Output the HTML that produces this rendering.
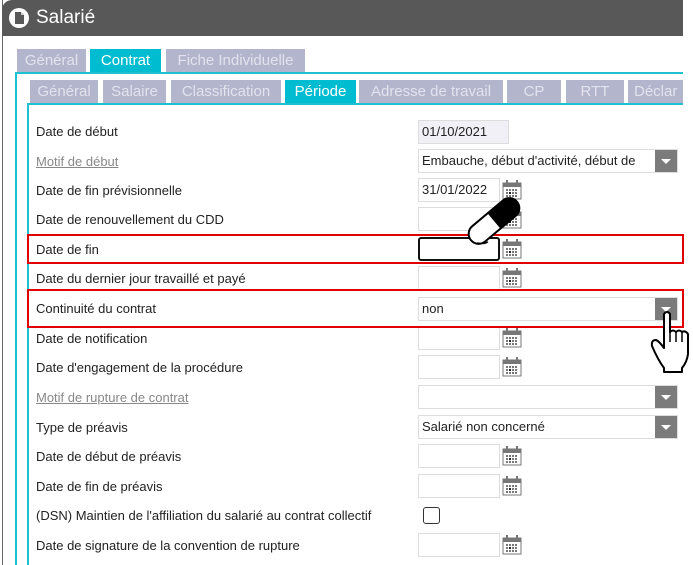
<!DOCTYPE html>
<html><head><meta charset="utf-8"><style>
*{margin:0;padding:0;box-sizing:border-box}
body{width:693px;height:565px;background:#fff;position:relative;overflow:hidden;font-family:"Liberation Sans",sans-serif;font-size:13px;color:#222}
.a{position:absolute}
.title{left:2px;top:0;width:681px;height:36px;background:#585858;border-top-left-radius:10px;color:#fff;font-size:19px;line-height:36px;padding-left:34px}
.tab{position:absolute;height:23px;background:#b3b5cc;color:#e2e3ee;font-size:15px;line-height:23px;text-align:center}
.tab.on{background:#00bcd0;color:#fff}
.lbl{position:absolute;left:36px;line-height:16px;margin-top:1px}
.lbl.u{color:#888;text-decoration:underline}
.inp{position:absolute;left:418px;width:82px;height:24px;border:1px solid #ddd;background:#fff;padding-left:3px;line-height:22px;font-size:13px}
.sel{position:absolute;left:418px;width:260px;height:24px;border:1px solid #ddd;background:#fff;padding-left:3px;line-height:22px;font-size:13px;overflow:hidden;white-space:nowrap}
.sel .b{position:absolute;right:0;top:0;width:22px;height:22px;background:#7b7b7b}
.sel .b:after{content:"";position:absolute;left:6px;top:9px;border-left:5px solid transparent;border-right:5px solid transparent;border-top:5px solid #fff}
.cal{position:absolute;left:502px;width:20px;height:20px}
.red{position:absolute;left:27px;width:657px;border:2px solid #e00000}
</style></head><body>
<div class="a" style="left:2px;top:0;width:1px;height:565px;background:#666"></div>
<div class="a title">Salarié</div>
<svg class="a" style="left:8px;top:7px" width="22" height="22" viewBox="0 0 22 22"><circle cx="11" cy="11" r="10" fill="#fff"/><path d="M7 5h6l3 3v9H7z" fill="#585858"/><path d="M13 5v3h3" fill="#ccc"/></svg>
<div class="tab" style="left:17px;top:49px;width:69px">Général</div>
<div class="tab on" style="left:90px;top:49px;width:71px">Contrat</div>
<div class="tab" style="left:166px;top:49px;width:139px">Fiche Individuelle</div>
<div class="a" style="left:15px;top:72px;width:668px;height:2px;background:#1fc0d2"></div>
<div class="a" style="left:15px;top:72px;width:2px;height:493px;background:#1fc0d2"></div>
<div class="tab" style="left:30px;top:80px;width:68px">Général</div>
<div class="tab" style="left:103px;top:80px;width:63px">Salaire</div>
<div class="tab" style="left:171px;top:80px;width:110px">Classification</div>
<div class="tab on" style="left:285px;top:80px;width:71px">Période</div>
<div class="tab" style="left:359px;top:80px;width:144px">Adresse de travail</div>
<div class="tab" style="left:507px;top:80px;width:54px">CP</div>
<div class="tab" style="left:566px;top:80px;width:58px">RTT</div>
<div class="tab" style="left:628px;top:80px;width:55px;text-align:left;padding-left:6px;overflow:hidden">Déclar</div>
<div class="a" style="left:27px;top:103px;width:656px;height:2px;background:#1fc0d2"></div>
<div class="a" style="left:27px;top:103px;width:2px;height:462px;background:#1fc0d2"></div>

<div class="lbl" style="top:123px">Date de début</div>
<div class="lbl u" style="top:153px">Motif de début </div>
<div class="lbl" style="top:182px">Date de fin prévisionnelle</div>
<div class="lbl" style="top:211px">Date de renouvellement du CDD</div>
<div class="lbl" style="top:241px">Date de fin</div>
<div class="lbl" style="top:270px">Date du dernier jour travaillé et payé</div>
<div class="lbl" style="top:300px">Continuité du contrat</div>
<div class="lbl" style="top:330px">Date de notification</div>
<div class="lbl" style="top:359px">Date d'engagement de la procédure</div>
<div class="lbl u" style="top:389px">Motif de rupture de contrat </div>
<div class="lbl" style="top:419px">Type de préavis</div>
<div class="lbl" style="top:448px">Date de début de préavis</div>
<div class="lbl" style="top:478px">Date de fin de préavis</div>
<div class="lbl" style="top:507px">(DSN) Maintien de l'affiliation du salarié au contrat collectif</div>
<div class="lbl" style="top:537px">Date de signature de la convention de rupture</div>

<div class="inp" style="top:120px;width:91px;background:#f0f0f6">01/10/2021</div>
<div class="sel" style="top:149px">Embauche, début d'activité, début de<div class="b"></div></div>
<div class="inp" style="top:178px">31/01/2022</div>
<div class="inp" style="top:207px"></div>
<div class="inp" style="top:237px;border:2px solid #111;border-radius:3px"></div>
<div class="inp" style="top:266px"></div>
<div class="sel" style="top:297px">non<div class="b"></div></div>
<div class="inp" style="top:326px"></div>
<div class="inp" style="top:355px"></div>
<div class="sel" style="top:385px"><div class="b"></div></div>
<div class="sel" style="top:415px">Salarié non concerné<div class="b"></div></div>
<div class="inp" style="top:444px"></div>
<div class="inp" style="top:474px"></div>
<div class="a" style="left:423px;top:507px;width:17px;height:17px;border:1px solid #333;border-radius:3px"></div>
<div class="inp" style="top:533px"></div>

<svg width="0" height="0" style="position:absolute"><defs><g id="c"><rect x="1" y="3" width="18" height="16" fill="#fff" stroke="#777"/><rect x="1" y="3" width="18" height="4" fill="#777"/><rect x="4" y="0" width="2" height="5" fill="#777"/><rect x="14" y="0" width="2" height="5" fill="#777"/><g fill="#777"><rect x="4" y="9" width="2" height="2"/><rect x="7" y="9" width="2" height="2"/><rect x="10" y="9" width="2" height="2"/><rect x="13" y="9" width="2" height="2"/><rect x="4" y="12" width="2" height="2"/><rect x="7" y="12" width="2" height="2" fill="#222"/><rect x="10" y="12" width="2" height="2"/><rect x="13" y="12" width="2" height="2"/><rect x="4" y="15" width="2" height="2"/><rect x="7" y="15" width="2" height="2"/><rect x="10" y="15" width="2" height="2"/><rect x="13" y="15" width="2" height="2"/></g></g></defs></svg>
<svg class="cal" style="top:180px" viewBox="0 0 20 20"><use href="#c"/></svg>
<svg class="cal" style="top:209px" viewBox="0 0 20 20"><use href="#c"/></svg>
<svg class="cal" style="top:239px" viewBox="0 0 20 20"><use href="#c"/></svg>
<svg class="cal" style="top:268px" viewBox="0 0 20 20"><use href="#c"/></svg>
<svg class="cal" style="top:328px" viewBox="0 0 20 20"><use href="#c"/></svg>
<svg class="cal" style="top:357px" viewBox="0 0 20 20"><use href="#c"/></svg>
<svg class="cal" style="top:446px" viewBox="0 0 20 20"><use href="#c"/></svg>
<svg class="cal" style="top:476px" viewBox="0 0 20 20"><use href="#c"/></svg>
<svg class="cal" style="top:535px" viewBox="0 0 20 20"><use href="#c"/></svg>

<div class="red" style="top:234px;height:30px"></div>
<div class="red" style="top:289px;height:39px"></div>

<svg class="a" style="left:460px;top:190px" width="80" height="70" viewBox="0 0 80 70">
<g transform="translate(34,31) rotate(-40)">
<rect x="-30" y="-10" width="60" height="20" rx="10" fill="#fff" stroke="#000" stroke-width="2"/>
<path d="M0 -10H20A10 10 0 0 1 20 10H0Z" fill="#000"/>
<path d="M-27 6 Q-22 12 -18 12" fill="none" stroke="#000" stroke-width="1.5"/>
</g></svg>
<svg class="a" style="left:650px;top:310px" width="42" height="65" viewBox="0 0 42 65">
<path d="M14 4 Q17 0 20 4 L20 22 Q23 19 26 22 Q29 19 32 22 Q35 20 38 24 L38 44 Q37 52 32 58 L32 62 L14 62 L14 58 Q8 50 2 36 Q1 30 6 30 Q9 31 14 38 Z" fill="#fff" stroke="#000" stroke-width="2" stroke-linejoin="round"/>
<path d="M20 22 V32 M26 22 V32 M32 22 V32" stroke="#000" stroke-width="1.5"/>
</svg>
</body></html>
